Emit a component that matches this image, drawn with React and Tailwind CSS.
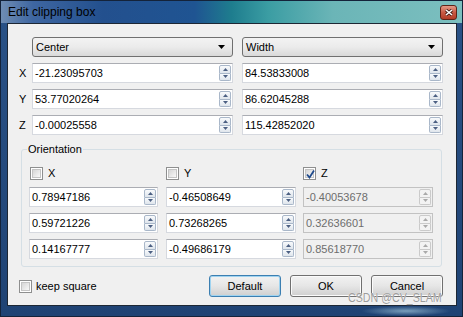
import React from "react";

function Arrow({ up, color }) {
  return (
    <svg width="5" height="3" viewBox="0 0 5 3">
      <path d={up ? "M0 3 L2.5 0 L5 3Z" : "M0 0 L5 0 L2.5 3Z"} fill={color} />
    </svg>
  );
}

function Spin({ disabled }) {
  const c = disabled ? "#a9a9a9" : "#4b5f82";
  const half = disabled
    ? "flex-1 flex items-center justify-center border border-[#cacaca] bg-[#f3f3f3]"
    : "flex-1 flex items-center justify-center border border-[#a9b7c9] bg-gradient-to-b from-[#f8fafc] to-[#dfe5ec]";
  return (
    <div className="flex flex-col w-[13px] py-[1px] pr-[1px]">
      <div className={half + " rounded-t-[2px]"}>
        <Arrow up color={c} />
      </div>
      <div className={half + " rounded-b-[2px] border-t-0"}>
        <Arrow color={c} />
      </div>
    </div>
  );
}

function SpinBox({ value, w, disabled }) {
  const box = disabled
    ? "bg-[#f0f0f0] border-[#c2c2c2] text-[#6d6d6d]"
    : "bg-white border-[#d6d9df] border-t-[#abadb3] text-black";
  return (
    <div className={"flex h-[20px] items-stretch border " + box + " " + w}>
      <div className="flex-1 flex items-center pl-[2px] leading-none">{value}</div>
      <Spin disabled={disabled} />
    </div>
  );
}

function Combo({ text }) {
  return (
    <div className="w-[201px] h-[20px] rounded-[3px] border border-[#707070] bg-gradient-to-b from-[#f3f3f3] via-[#ebebeb] to-[#d9d9d9] flex items-center justify-between pl-[3px] pr-[7px]">
      <span>{text}</span>
      <svg width="7" height="4" viewBox="0 0 7 4">
        <path d="M0 0H7L3.5 4Z" fill="#000" />
      </svg>
    </div>
  );
}

function Check({ checked }) {
  return (
    <div className="w-[13px] h-[13px] border border-[#8e8f8f] bg-white p-[1px] relative">
      <div className="w-full h-full border border-[#c4c4c4] bg-gradient-to-br from-[#d6d6d6] to-[#f8f8f8]"></div>
      {checked && (
        <svg className="absolute left-[1px] top-[1px]" width="11" height="11" viewBox="0 0 11 11">
          <path d="M2 5.5 L4.5 8.5 L9 1.5" stroke="#1f4a8c" strokeWidth="1.8" fill="none" />
        </svg>
      )}
    </div>
  );
}

function Btn({ text, def }) {
  return (
    <div
      className={
        "w-[72px] h-[22px] rounded-[3px] border flex items-center justify-center bg-gradient-to-b from-[#f2f2f2] via-[#e6e6e6] to-[#cfcfcf] " +
        (def ? "border-[#3c7fb1] shadow-[inset_0_0_0_1px_#9fd3f0]" : "border-[#707070] shadow-[inset_0_0_0_1px_#fbfbfb]")
      }
    >
      {text}
    </div>
  );
}

export default function App() {
  const mainRows = [
    ["X", "-21.23095703", "84.53833008"],
    ["Y", "53.77020264", "86.62045288"],
    ["Z", "-0.00025558", "115.42852020"],
  ];
  const oriRows = [
    ["0.78947186", "-0.46508649", "-0.40053678"],
    ["0.59721226", "0.73268265", "0.32636601"],
    ["0.14167777", "-0.49686179", "0.85618770"],
  ];
  return (
    <div className="w-[463px] h-[317px] relative overflow-hidden font-['Liberation_Sans',sans-serif] text-[11px] text-black bg-gradient-to-b from-[#2a5287] to-[#1f4374] border border-[#14233a] flex flex-col">
      {/* title bar */}
      <div className="h-[22px] shrink-0 flex items-center justify-between pl-[7px] pr-[5px] bg-[linear-gradient(90deg,#6f8db3_0%,#3e66a1_7%,#23508e_22%,#1f5492_42%,#1e7d8e_50%,#3b9da3_58%,#6bb5b7_72%,#7cbfbf_100%)]">
        <span className="text-[12px] leading-none">Edit clipping box</span>
        <div className="w-[17px] h-[15px] rounded-[3px] border border-[#5e2418] bg-gradient-to-b from-[#e39a88] via-[#c95a44] to-[#b33d27] flex items-center justify-center">
          <svg width="8" height="7" viewBox="0 0 8 7">
            <path d="M1 1 L7 6 M7 1 L1 6" stroke="#3a1710" strokeWidth="3" />
            <path d="M1 1 L7 6 M7 1 L1 6" stroke="#ffffff" strokeWidth="1.6" />
          </svg>
        </div>
      </div>

      {/* client area */}
      <div className="flex-1 ml-[6px] mr-[5px] mb-[10px] border border-[#1d2734] bg-[#f0f0f0] flex flex-col pt-[13px] pb-[7px]">
        {/* combos */}
        <div className="flex pl-[24px] gap-[9px]">
          <Combo text="Center" />
          <Combo text="Width" />
        </div>
        <div className="flex flex-col gap-[6px] mt-[6px]">
          {mainRows.map((r) => (
            <div key={r[0]} className="flex items-center">
              <div className="w-[24px] pl-[11px]">{r[0]}</div>
              <SpinBox value={r[1]} w="w-[201px]" />
              <div className="w-[9px]"></div>
              <SpinBox value={r[2]} w="w-[201px]" />
            </div>
          ))}
        </div>

        {/* orientation group */}
        <div className="relative ml-[13px] mr-[14px] mt-[14px] border border-[#d5dfe5] rounded-[3px] pt-[17px] pb-[7px] pl-[7px]">
          <div className="absolute left-[5px] -top-[7px] px-[1px] bg-[#f0f0f0] leading-[13px]">Orientation</div>
          <div className="flex items-center h-[13px]">
            <div className="w-[137px] pl-[1px] flex items-center gap-[5px]">
              <Check /> <span>X</span>
            </div>
            <div className="w-[137px] flex items-center gap-[5px]">
              <Check /> <span>Y</span>
            </div>
            <div className="flex items-center gap-[5px]">
              <Check checked /> <span>Z</span>
            </div>
          </div>
          <div className="flex flex-col gap-[6px] mt-[7px]">
            {oriRows.map((r) => (
              <div key={r[0]} className="flex">
                <SpinBox value={r[0]} w="w-[129px]" />
                <div className="w-[8px]"></div>
                <SpinBox value={r[1]} w="w-[130px]" />
                <div className="w-[7px]"></div>
                <SpinBox value={r[2]} w="w-[130px]" disabled />
              </div>
            ))}
          </div>
        </div>

        {/* bottom row */}
        <div className="flex items-center mt-[8px] pl-[11px] pr-[13px]">
          <div className="flex items-center gap-[4px]">
            <Check /> <span>keep square</span>
          </div>
          <div className="flex-1"></div>
          <div className="flex gap-[9px]">
            <Btn text="Default" def />
            <Btn text="OK" />
            <Btn text="Cancel" />
          </div>
        </div>
      </div>

      {/* bottom frame glow */}
      <div className="absolute left-[360px] bottom-0 w-[90px] h-[10px] bg-[radial-gradient(ellipse_at_center,rgba(180,220,235,0.6),rgba(180,220,235,0)_70%)]"></div>

      {/* watermark */}
      <div className="absolute left-[347px] top-[290px] text-[13px] leading-none text-[#9c9c9c] scale-x-[0.82] origin-left whitespace-nowrap [text-shadow:0_0_1px_#ffffff]">
        CSDN @CV_SLAM
      </div>
    </div>
  );
}
